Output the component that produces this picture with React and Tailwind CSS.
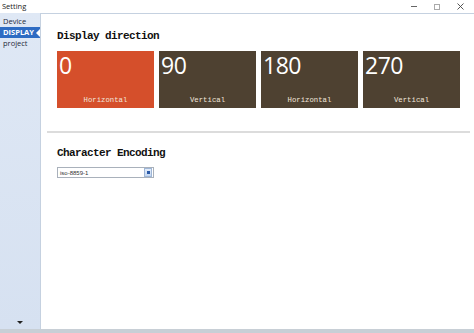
export default function App() {
    const tiles = [
        { value: "0", label: "Horizontal", active: true },
        { value: "90", label: "Vertical" },
        { value: "180", label: "Horizontal" },
        { value: "270", label: "Vertical" },
    ];

    return (
        <div className="w-[474px] h-[333px] flex flex-col bg-white overflow-hidden font-['Open_Sans',sans-serif]">
            {/* title bar */}
            <div className="h-[13px] flex items-center justify-between shrink-0">
                <span className="pl-[2px] text-[7.5px] leading-none text-[#222]">
                    Setting
                </span>
                <div className="flex items-center gap-[17px] pr-[10px]">
                    <div className="w-[6px] h-px bg-[#666]" />
                    <div className="w-[6px] h-[6px] border border-[#aaa]" />
                    <svg width="7" height="7" viewBox="0 0 7 7">
                        <path d="M0.5 0.5L6.5 6.5M6.5 0.5L0.5 6.5" stroke="#444" strokeWidth="0.9" />
                    </svg>
                </div>
            </div>

            <div className="flex flex-1 min-h-0">
                {/* sidebar */}
                <div className="w-[40px] shrink-0 flex flex-col bg-gradient-to-b from-[#dfe8f5] to-[#d6e1f1] pt-[3px] text-[7.5px] leading-none">
                    <div className="h-[11px] flex items-center pl-[3px] text-[#1f2a3a]">
                        Device
                    </div>
                    <div className="h-[11px] flex items-center justify-between pl-[3px] bg-[#2e6cc3] text-white font-bold">
                        <span>DISPLAY</span>
                        <div className="w-0 h-0 border-y-[4px] border-y-transparent border-r-[4px] border-r-white" />
                    </div>
                    <div className="h-[12px] flex items-center pl-[3px] text-[#1f2a3a]">
                        project
                    </div>
                    <div className="flex-1" />
                    <div className="flex justify-center pb-[5px]">
                        <div className="w-0 h-0 border-x-[3px] border-x-transparent border-t-[3px] border-t-[#222]" />
                    </div>
                </div>

                {/* content */}
                <div className="flex-1 border-l border-t border-[#c5d1e0] flex flex-col">
                    <div className="pl-[16px] pt-[16px]">
                        <h2 className="font-['Liberation_Mono',monospace] font-bold text-[11px] leading-[13px] tracking-[-0.6px] text-[#111]">
                            Display direction
                        </h2>
                        <div className="flex gap-[5px] mt-[8px]">
                            {tiles.map((tile) => (
                                <div
                                    key={tile.value}
                                    className={`w-[97px] h-[57px] flex flex-col justify-between ${
                                        tile.active ? "bg-[#d54f2b]" : "bg-[#4e4131]"
                                    }`}
                                >
                                    <span className="pl-[2px] pt-[1px] text-[23px] leading-[26px] text-white tracking-[-0.5px]">
                                        {tile.value}
                                    </span>
                                    <span className="text-center pb-[4px] font-['Liberation_Mono',monospace] text-[7.3px] leading-[8px] text-[#f1e6dc]">
                                        {tile.label}
                                    </span>
                                </div>
                            ))}
                        </div>
                    </div>

                    <div className="ml-[6px] mr-[4px] mt-[23px] h-[2px] bg-[#dcdcdc]" />

                    <div className="pl-[16px] pt-[14px]">
                        <h2 className="font-['Liberation_Mono',monospace] font-bold text-[11px] leading-[13px] tracking-[-0.6px] text-[#111]">
                            Character Encoding
                        </h2>
                        <div className="mt-[7px] w-[97px] h-[11px] flex items-center border border-[#a9b1bb] bg-white">
                            <span className="flex-1 pl-[2px] text-[6px] leading-none text-[#333] font-['Liberation_Sans',sans-serif]">
                                iso-8859-1
                            </span>
                            <div className="w-[8px] h-[9px] mr-px flex items-center justify-center bg-gradient-to-b from-[#e4eefb] to-[#c3d6f0] border border-[#9fb6d6]">
                                <div className="w-[3px] h-[3px] bg-[#2b5aa8]" />
                            </div>
                        </div>
                    </div>
                </div>
            </div>

            <div className="h-[4px] shrink-0 bg-[#c8cfd6]" />
        </div>
    );
}
